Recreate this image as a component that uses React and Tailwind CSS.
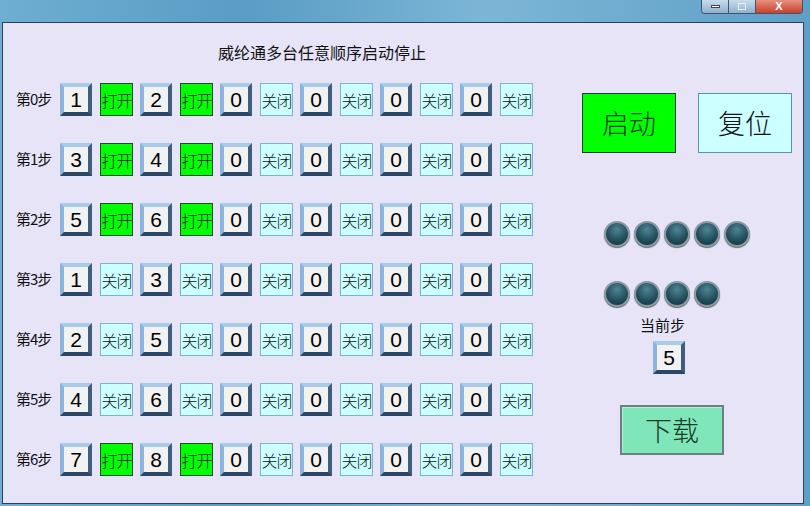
import React from "react";

const rows = [
  [["1", 1], ["2", 1], ["0", 0], ["0", 0], ["0", 0], ["0", 0]],
  [["3", 1], ["4", 1], ["0", 0], ["0", 0], ["0", 0], ["0", 0]],
  [["5", 1], ["6", 1], ["0", 0], ["0", 0], ["0", 0], ["0", 0]],
  [["1", 0], ["3", 0], ["0", 0], ["0", 0], ["0", 0], ["0", 0]],
  [["2", 0], ["5", 0], ["0", 0], ["0", 0], ["0", 0], ["0", 0]],
  [["4", 0], ["6", 0], ["0", 0], ["0", 0], ["0", 0], ["0", 0]],
  [["7", 1], ["8", 1], ["0", 0], ["0", 0], ["0", 0], ["0", 0]],
];

const cjk = "font-['SimSun','Noto_Sans_CJK_SC',sans-serif]";

function NumBox({ value }) {
  return (
    <div className="w-[32px] h-[33px] border-[4px] border-t-[#a9cbea] border-l-[#8db4dc] border-r-[#3f5f80] border-b-[#2c4766] bg-[#f2f2f2] flex items-center justify-center">
      <span className="font-['Liberation_Sans',Arial,sans-serif] text-[21px] leading-none text-black">
        {value}
      </span>
    </div>
  );
}

function StateBox({ on }) {
  return (
    <div
      className={
        on
          ? "w-[33px] h-[33px] border border-[#1f4a30] bg-[#00ff00] flex items-center justify-center"
          : "w-[33px] h-[33px] border border-[#7fb4c8] bg-[#ccffff] flex items-center justify-center"
      }
    >
      <span className={`${cjk} text-[16px] tracking-[-1px] leading-none font-light text-[#111] whitespace-nowrap`}>
        {on ? "打开" : "关闭"}
      </span>
    </div>
  );
}

function Dot() {
  return (
    <div className="w-[26px] h-[26px] rounded-full bg-[#8a9aa4] p-[2px] shadow-[0_1px_1px_#666]">
      <div className="w-full h-full rounded-full bg-[radial-gradient(circle_at_50%_30%,#4f8494,#24505e_55%,#0f2c36)]" />
    </div>
  );
}

export default function App() {
  return (
    <div className="w-[810px] h-[506px] overflow-hidden flex flex-col bg-[linear-gradient(90deg,#6eaed2,#5a9cc4_30%,#7bb6d6_60%,#5f9fc6)]">
      {/* title bar */}
      <div className="h-[22px] flex justify-end pr-[7px]">
        <div className="flex h-[14px] rounded-b-[4px] border border-t-0 border-[#3d5570] overflow-hidden">
          <div className="w-[27px] bg-[linear-gradient(#c8dcec,#8fb0cc)] flex items-center justify-center border-r border-[#3d5570]">
            <div className="w-[9px] h-[3px] bg-white border border-[#445]" />
          </div>
          <div className="w-[27px] bg-[linear-gradient(#c8dcec,#8fb0cc)] flex items-center justify-center border-r border-[#3d5570]">
            <div className="w-[8px] h-[7px] border border-[#e8eef4]" />
          </div>
          <div className="w-[46px] bg-[linear-gradient(#e89080,#c8402a)] flex items-center justify-center">
            <span className="font-['Liberation_Sans',Arial,sans-serif] text-[11px] font-bold leading-none text-white">
              X
            </span>
          </div>
        </div>
      </div>

      {/* client area */}
      <div className="flex-1 flex pl-[2px] pr-[6px] pb-[2px]">
        <div className="flex-1 border border-[#2e3f5c] bg-[#e7e4f8] flex">
          {/* left side */}
          <div className="flex flex-col pl-[13px]">
            <div className={`${cjk} text-[16px] text-[#111] leading-none pl-[202px] pt-[21px] h-[60px]`}>
              威纶通多台任意顺序启动停止
            </div>
            <div className="flex flex-col gap-[27px]">
              {rows.map((row, i) => (
                <div key={i} className="flex items-center">
                  <div className={`${cjk} w-[44px] text-[15px] tracking-[-1px] text-[#111]`}>
                    第{i}步
                  </div>
                  {row.map(([n, on], j) => (
                    <div key={j} className="flex">
                      <div className="w-[40px]">
                        <NumBox value={n} />
                      </div>
                      <div className="w-[40px]">
                        <StateBox on={on} />
                      </div>
                    </div>
                  ))}
                </div>
              ))}
            </div>
          </div>

          {/* right side */}
          <div className="flex flex-col pl-[42px] pt-[70px]">
            <div className="flex gap-[22px]">
              <div className="w-[94px] h-[60px] border border-[#203a40] bg-[#00ff00] flex items-center justify-center">
                <span className={`${cjk} text-[27px] font-light text-[#1a3a2a]`}>启动</span>
              </div>
              <div className="w-[94px] h-[60px] border border-[#5f90b0] bg-[#ccffff] flex items-center justify-center">
                <span className={`${cjk} text-[27px] font-light text-[#111]`}>复位</span>
              </div>
            </div>
            <div className="flex gap-[4px] pl-[22px] mt-[68px]">
              <Dot />
              <Dot />
              <Dot />
              <Dot />
              <Dot />
            </div>
            <div className="flex gap-[4px] pl-[22px] mt-[34px]">
              <Dot />
              <Dot />
              <Dot />
              <Dot />
            </div>
            <div className={`${cjk} text-[15px] text-[#111] pl-[58px] mt-[8px] leading-[20px]`}>
              当前步
            </div>
            <div className="pl-[71px] mt-[6px]">
              <NumBox value="5" />
            </div>
            <div className="pl-[38px] mt-[31px]">
              <div className="w-[104px] h-[50px] border-2 border-[#6f7f7f] bg-[#7ee6b8] flex items-center justify-center shadow-[inset_1px_1px_0_#b0f0d8]">
                <span className={`${cjk} text-[27px] font-light text-[#1a3a2a]`}>下载</span>
              </div>
            </div>
          </div>
        </div>
      </div>
    </div>
  );
}
